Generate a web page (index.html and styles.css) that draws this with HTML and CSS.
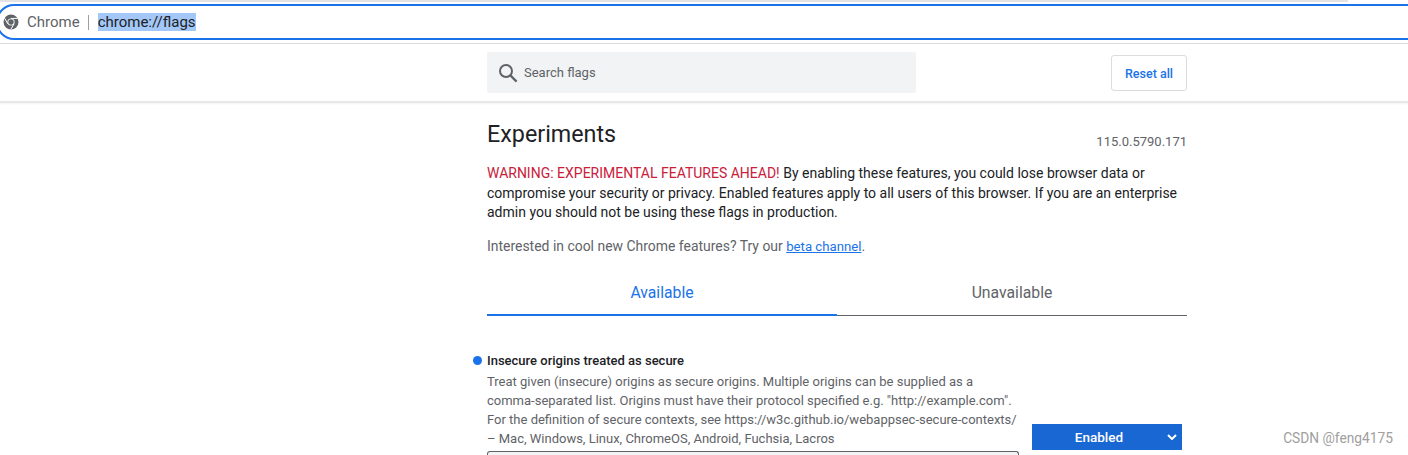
FILE: index.html
```html
<!DOCTYPE html>
<html lang="en">
<head>
<meta charset="utf-8">
<title>chrome://flags</title>
<link rel="stylesheet" href="styles.css">
</head>
<body>
<div class="top-line"></div>
<div class="toolbar">
  <div class="omnibox">
    <svg class="chrome-icon" width="16" height="16" viewBox="0 0 16 16"><circle cx="8" cy="8" r="7.5" fill="#5f6368"/><circle cx="8" cy="8" r="3.6" fill="#fff"/><circle cx="8" cy="8" r="2.7" fill="#5f6368"/><path d="M8 4.4H14.6M4.9 9.9L1.6 4.2M11.1 9.8L7.8 15.4" stroke="#fff" stroke-width="1" fill="none"/></svg>
    <span class="site">Chrome</span>
    <span class="divider"></span>
    <span class="url">chrome://flags</span>
  </div>
</div>
<header class="flags-header">
  <div class="column header-row">
    <div class="search">
      <svg width="20" height="20" viewBox="0 0 20 20"><circle cx="8" cy="8" r="6" fill="none" stroke="#5f6368" stroke-width="2"/><path d="M12.4 12.4L18.6 18.6" stroke="#5f6368" stroke-width="2.2"/></svg>
      <span>Search flags</span>
    </div>
    <button class="reset">Reset all</button>
  </div>
</header>
<main class="column">
  <div class="title-row">
    <h1>Experiments</h1>
    <span class="version">115.0.5790.171</span>
  </div>
  <p class="warning"><span class="alert">WARNING: EXPERIMENTAL FEATURES AHEAD!</span> By enabling these features, you could lose browser data or compromise your security or privacy. Enabled features apply to all users of this browser. If you are an enterprise admin you should not be using these flags in production.</p>
  <p class="beta">Interested in cool new Chrome features? Try our <a href="#">beta channel</a>.</p>
  <div class="tabs">
    <div class="tab active">Available</div>
    <div class="tab">Unavailable</div>
  </div>
  <section class="flag">
    <div class="flag-text">
      <h2><span class="dot"></span>Insecure origins treated as secure</h2>
      <p>Treat given (insecure) origins as secure origins. Multiple origins can be supplied as a<br>comma-separated list. Origins must have their protocol specified e.g. "http://example.com".<br>For the definition of secure contexts, see https://w3c.github.io/webappsec-secure-contexts/<br>– Mac, Windows, Linux, ChromeOS, Android, Fuchsia, Lacros</p>
      <div class="textarea"></div>
    </div>
    <div class="select">
      <span>Enabled</span>
      <svg width="10" height="6" viewBox="0 0 10 6"><path d="M1 1L5 5L9 1" fill="none" stroke="#fff" stroke-width="2"/></svg>
    </div>
  </section>
</main>
<div class="watermark">CSDN @feng4175</div>
</body>
</html>
```
FILE: styles.css
```css
* { box-sizing: border-box; }
html, body { margin: 0; height: 455px; overflow: hidden; background: #fff; }
body { font-family: Roboto, "Liberation Sans", sans-serif; color: #202124; position: relative; }
.top-line { width: 1348px; height: 2px; background: #e3e3e3; }
.toolbar { height: 42px; padding-top: 2px; border-bottom: 1px solid #dcdcdc; overflow: hidden; }
.omnibox { height: 36px; margin-left: -4px; width: 1440px; border: 2px solid #1a73e8; border-radius: 18px; display: flex; align-items: center; padding-left: 3px; }
.chrome-icon { flex: none; margin-left: 2px; }
.site { margin-left: 8px; font-size: 15px; color: #5f6368; }
.divider { width: 1px; height: 15px; background: #9aa0a6; margin: 0 9px 0 8px; }
.url { font-size: 15px; background: #a3c7f7; color: #202124; line-height: 18px; }
.flags-header { height: 59px; border-bottom: 2px solid #e8e8e8; box-shadow: 0 1px 2px rgba(0,0,0,.05); }
.column { width: 700px; margin-left: 487px; }
.header-row { display: flex; justify-content: space-between; align-items: flex-start; padding-top: 8px; }
.search { width: 429px; height: 41px; background: #f1f3f4; border-radius: 2px; display: flex; align-items: center; gap: 6px; padding-left: 11px; font-size: 13px; color: #5f6368; }
.reset { width: 76px; height: 36px; margin-top: 3px; background: #fff; border: 1px solid #dadce0; border-radius: 3px; color: #1a73e8; font: 500 12.5px Roboto, sans-serif; padding: 1px 0 0; }
.title-row { display: flex; justify-content: space-between; align-items: flex-end; margin-top: 18px; }
h1 { margin: 0; font-size: 23.3px; font-weight: 400; line-height: 26px; }
.version { font-size: 13px; color: #5f6368; line-height: 16px; margin-bottom: -3px; }
.warning { margin: 17px 0 0; font-size: 14px; line-height: 19.6px; }
.alert { color: #c9203a; }
.beta { margin: 13.2px 0 0; font-size: 13.95px; line-height: 20px; color: #5f6368; }
.beta a { color: #1a73e8; font-size: 13.2px; }
.tabs { display: flex; margin-top: 14px; }
.tab { flex: 1; height: 45px; text-align: center; font-size: 15.75px; line-height: 44px; color: #5f6368; border-bottom: 1px solid #5f6368; }
.tab.active { color: #1a73e8; border-bottom: 2px solid #1a73e8; }
.flag { display: flex; margin-top: 35px; }
.flag-text { width: 532px; flex: none; }
h2 { margin: 0; font-size: 13px; font-weight: 500; line-height: 20px; position: relative; }
.dot { position: absolute; left: -14px; top: 5px; width: 9px; height: 9px; border-radius: 50%; background: #1a73e8; }
.flag-text p { margin: 1px 0 0; font-size: 13px; line-height: 19px; color: #5f6368; white-space: nowrap; }
.textarea { height: 4px; margin-top: 3px; background: #f1f3f4; border: 1px solid #5f6368; border-bottom: 0; border-radius: 3px 3px 0 0; }
.select { width: 150px; height: 26px; margin: 73px 0 0 13px; padding-right: 16px; background: #1967d2; color: #fff; font-size: 13.5px; font-weight: 500; display: flex; align-items: center; justify-content: center; position: relative; }
.select svg { position: absolute; right: 5px; top: 10px; }
.watermark { position: absolute; right: 15px; top: 430px; font-size: 13.75px; color: #a0a0a0; }
```
